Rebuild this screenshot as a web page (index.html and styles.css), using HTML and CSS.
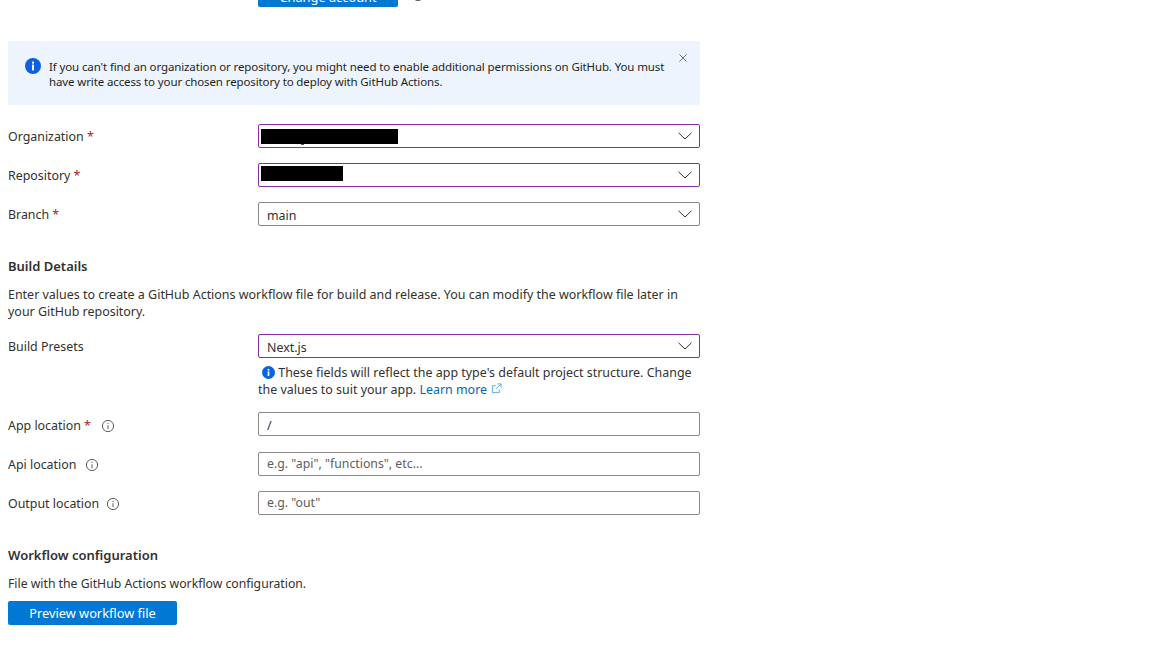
FILE: index.html
```html
<!DOCTYPE html>
<html lang="en">
<head>
<meta charset="utf-8">
<title>GitHub deployment details</title>
<link rel="stylesheet" href="styles.css">
</head>
<body>
<main class="page">
  <div class="account-row">
    <button class="btn btn-account" type="button">Change account</button>
    <svg class="hint hint-account" viewBox="0 0 14 14"><circle cx="7" cy="7" r="5.6"/><path d="M7 6.2v4M7 3.8v1.2"/></svg>
  </div>

  <section class="notice">
    <svg class="notice-icon" viewBox="0 0 16 16"><circle cx="8" cy="8" r="8" fill="#0b62e0"/><rect x="7" y="6.6" width="2" height="5.8" fill="#fff"/><rect x="7" y="3.6" width="2" height="2" fill="#fff"/></svg>
    <p class="notice-text">If you can't find an organization or repository, you might need to enable additional permissions on GitHub. You must have write access to your chosen repository to deploy with GitHub Actions.</p>
    <svg class="notice-close" viewBox="0 0 10 10"><path d="M.5.5l9 9M9.500.5l-9 9"/></svg>
  </section>

  <div class="rows rows-source">
    <div class="row">
      <span class="label">Organization <em>*</em></span>
      <div class="field select focus"><span class="redact redact-org"></span><svg class="chev" viewBox="0 0 14 8"><path d="M.5.8L7 7l6.500-6.200"/></svg></div>
    </div>
    <div class="row">
      <span class="label">Repository <em>*</em></span>
      <div class="field select focus"><span class="redact redact-repo"></span><svg class="chev" viewBox="0 0 14 8"><path d="M.5.8L7 7l6.500-6.200"/></svg></div>
    </div>
    <div class="row">
      <span class="label">Branch <em>*</em></span>
      <div class="field select"><span class="value">main</span><svg class="chev" viewBox="0 0 14 8"><path d="M.5.8L7 7l6.500-6.200"/></svg></div>
    </div>
  </div>

  <h2 class="heading heading-build">Build Details</h2>
  <p class="copy copy-build">Enter values to create a GitHub Actions workflow file for build and release. You can modify the workflow file later in your GitHub repository.</p>

  <div class="row">
    <span class="label">Build Presets</span>
    <div class="field select focus"><span class="value">Next.js</span><svg class="chev" viewBox="0 0 14 8"><path d="M.5.8L7 7l6.500-6.200"/></svg></div>
  </div>
  <p class="preset-info"><svg class="preset-icon" viewBox="0 0 16 16"><circle cx="8" cy="8" r="8" fill="#0b62e0"/><rect x="7" y="6.600" width="2" height="5.800" fill="#fff"/><rect x="7" y="3.600" width="2" height="2" fill="#fff"/></svg> These fields will reflect the app type's default project structure. Change the values to suit your app. <a href="#">Learn more <svg class="ext" viewBox="0 0 12 12"><path d="M9 7v3.500H1.500V3H5M7 1h4v4M11 1L5.500 6.500"/></svg></a></p>

  <div class="rows-location">
    <div class="row row-app">
      <span class="label">App location <em>*</em><svg class="hint hint-app" viewBox="0 0 14 14"><circle cx="7" cy="7" r="5.600"/><path d="M7 6.200v4M7 3.800v1.200"/></svg></span>
      <div class="field"><span class="value">/</span></div>
    </div>
    <div class="row row-api">
      <span class="label">Api location<svg class="hint hint-wide" viewBox="0 0 14 14"><circle cx="7" cy="7" r="5.600"/><path d="M7 6.200v4M7 3.800v1.200"/></svg></span>
      <div class="field"><span class="placeholder">e.g. "api", "functions", etc...</span></div>
    </div>
    <div class="row row-output">
      <span class="label">Output location<svg class="hint" viewBox="0 0 14 14"><circle cx="7" cy="7" r="5.600"/><path d="M7 6.200v4M7 3.800v1.200"/></svg></span>
      <div class="field"><span class="placeholder">e.g. "out"</span></div>
    </div>
  </div>

  <h2 class="heading heading-workflow">Workflow configuration</h2>
  <p class="copy copy-workflow">File with the GitHub Actions workflow configuration.</p>
  <button class="btn btn-preview" type="button">Preview workflow file</button>
</main>
</body>
</html>
```
FILE: styles.css
```css
html, body {
  margin: 0;
  height: 653px;
  overflow: hidden;
  background: #fff;
}
.page {
  width: 692px;
  margin: -17px 0 0 8px;
  font-family: "Noto Sans", "Open Sans", sans-serif;
  font-size: 12.4px;
  line-height: 17px;
  color: #323130;
}
.account-row {
  display: flex;
  align-items: center;
  height: 24px;
  padding-left: 250px;
}
.btn {
  display: block;
  height: 24px;
  padding: 0;
  border: 0;
  border-radius: 2px;
  background: #0078d4;
  color: #fff;
  font: inherit;
  font-size: 12.8px;
}
.btn-account { width: 140px; padding-top: 5px; }
.btn-preview { width: 169px; margin-top: 9px; }
.hint {
  width: 14px;
  height: 14px;
  margin-left: 7px;
  flex: none;
  fill: none;
  stroke: #605e5c;
  stroke-width: 1;
  vertical-align: -3px;
}
.hint-wide { margin-left: 9px; }
.hint-app { margin-left: 10px; }
.hint-account { margin-left: 13px; }
.notice {
  position: relative;
  display: flex;
  gap: 8px;
  height: 64px;
  box-sizing: border-box;
  margin-top: 34px;
  padding: 17px 26px 0 17px;
  border-radius: 2px;
  background: #edf4fd;
  font-size: 11.5px;
  letter-spacing: -0.12px;
  line-height: 15px;
}
.notice-icon { width: 16px; height: 16px; flex: none; }
.notice-text { margin: 0; color: #1f1f1f; padding-top: 1px; }
.notice-close {
  position: absolute;
  top: 13px;
  right: 13px;
  width: 8px;
  height: 8px;
  fill: none;
  stroke: #605e5c;
  stroke-width: 1.100;
}
.rows { display: flex; flex-direction: column; gap: 15px; }
.rows-source { margin-top: 19px; }
.rows-location { margin-top: 14px; }
.row { display: flex; align-items: center; height: 24px; }
.row-api { margin-top: 16px; }
.row-output { margin-top: 15px; }
.row-app .label { padding-top: 2px; }
.label { width: 250px; flex: none; display: block; }
.label em { font-style: normal; color: #a4262c; }
.field {
  position: relative;
  flex: 1;
  display: flex;
  align-items: center;
  height: 24px;
  box-sizing: border-box;
  padding: 0 8px;
  border: 1px solid #8a8886;
  border-radius: 2px;
  background: #fff;
}
.focus { border-color: #8a2da5; }
.value { color: #323130; padding-top: 2px; }
.placeholder { color: #605e5c; font-size: 12.3px; padding-bottom: 1px; }
.redact { position: relative; display: block; height: 15px; margin-left: -6px; background: #000; }
.redact-org { width: 137px; }
.redact-org::after {
  content: "";
  position: absolute;
  left: 40px;
  bottom: -1px;
  width: 3px;
  height: 1px;
  background: #555;
}
.redact-repo { width: 82px; margin-top: -3px; }
.chev {
  position: absolute;
  right: 7px;
  top: 7px;
  width: 14px;
  height: 8px;
  fill: none;
  stroke: #323130;
  stroke-width: 1;
}
.heading { margin: 0; font: inherit; font-size: 13px; font-weight: 600; line-height: 18px; }
.heading-build { margin-top: 31px; }
.heading-workflow { margin-top: 31px; }
.copy { margin: 0; }
.copy-build { margin-top: 11px; margin-bottom: 14px; font-size: 12.46px; }
.copy-workflow { margin-top: 11px; font-size: 12.23px; }
.preset-info { margin: 6px 0 0 250px; color: #323130; font-size: 12.45px; }
.preset-icon { width: 13px; height: 13px; margin-left: 4px; vertical-align: -2px; }
.preset-info a { color: #0067b8; text-decoration: none; }
.ext { width: 11px; height: 11px; margin-left: 1px; fill: none; stroke: #5ba3dc; stroke-width: 1; vertical-align: 0; }
```
